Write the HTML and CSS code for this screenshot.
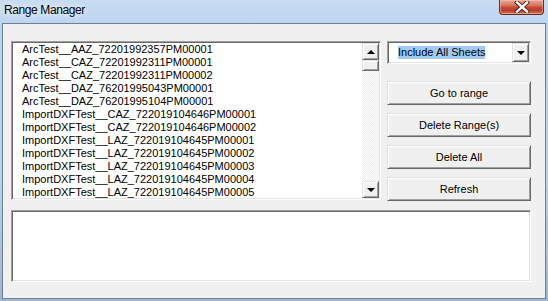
FILE: index.html
```html
<!DOCTYPE html>
<html>
<head>
<meta charset="utf-8">
<link rel="stylesheet" href="styles.css">
</head>
<body>
<div class="window">
  <div class="titlebar">
    <span class="title">Range Manager</span>
    <div class="close">
      <svg width="16" height="12" viewBox="0 0 16 12">
        <path d="M3 1.5 L13 10.5 M13 1.5 L3 10.5" stroke="#4a1a14" stroke-width="4.2" stroke-linecap="square" fill="none"/>
        <path d="M3 1.5 L13 10.5 M13 1.5 L3 10.5" stroke="#ffffff" stroke-width="2.4" stroke-linecap="square" fill="none"/>
      </svg>
    </div>
  </div>
  <div class="client">
    <div class="top">
      <div class="listbox">
        <ul class="items">
          <li>ArcTest__AAZ_72201992357PM00001</li>
          <li>ArcTest__CAZ_72201992311PM00001</li>
          <li>ArcTest__CAZ_72201992311PM00002</li>
          <li>ArcTest__DAZ_76201995043PM00001</li>
          <li>ArcTest__DAZ_76201995104PM00001</li>
          <li>ImportDXFTest__CAZ_722019104646PM00001</li>
          <li>ImportDXFTest__CAZ_722019104646PM00002</li>
          <li>ImportDXFTest__LAZ_722019104645PM00001</li>
          <li>ImportDXFTest__LAZ_722019104645PM00002</li>
          <li>ImportDXFTest__LAZ_722019104645PM00003</li>
          <li>ImportDXFTest__LAZ_722019104645PM00004</li>
          <li>ImportDXFTest__LAZ_722019104645PM00005</li>
        </ul>
        <div class="scrollbar">
          <div class="sbtn"><span class="tri up"></span></div>
          <div class="thumb"></div>
          <div class="track"></div>
          <div class="sbtn"><span class="tri down"></span></div>
        </div>
      </div>
      <div class="side">
        <div class="combo">
          <span class="value"><span class="sel">Include All Sheets</span></span>
          <div class="sbtn dd"><span class="tri down"></span></div>
        </div>
        <button class="btn first">Go to range</button>
        <button class="btn">Delete Range(s)</button>
        <button class="btn">Delete All</button>
        <button class="btn">Refresh</button>
      </div>
    </div>
    <div class="memo"></div>
  </div>
</div>
</body>
</html>
```
FILE: styles.css
```css
* { box-sizing: border-box; }
html, body { margin: 0; padding: 0; }
body {
  width: 548px;
  height: 301px;
  overflow: hidden;
  font-family: "Liberation Sans", Arial, sans-serif;
  font-size: 11px;
  color: #000;
}
.window {
  width: 548px;
  height: 301px;
  display: flex;
  flex-direction: column;
  background: linear-gradient(180deg, #c7dcf3 0%, #bcd5ef 8%, #b7d2ee 60%, #9fb6cc 100%);
}
.titlebar {
  height: 23px;
  display: flex;
  justify-content: space-between;
  align-items: flex-start;
  flex: none;
}
.title {
  padding: 3px 0 0 4px;
  font-size: 12px;
  line-height: 14px;
  letter-spacing: -0.4px;
  color: #000;
  text-shadow: 0 0 6px rgba(255,255,255,0.9), 0 0 10px rgba(255,255,255,0.7);
}
.close {
  width: 45px;
  height: 15px;
  margin-right: 4px;
  border: 1px solid #6d2a22;
  border-top: none;
  border-radius: 0 0 4px 4px;
  background: linear-gradient(180deg, #e8a492 0%, #d97c68 35%, #c4452f 55%, #b9402c 75%, #d47a60 100%);
  box-shadow: inset 0 0 0 1px rgba(255,210,200,0.45);
  display: flex;
  align-items: center;
  justify-content: center;
}
.client {
  flex: 1;
  margin: 0 2px 2px 2px;
  border: 1px solid #6e8194;
  background: #f0f0f0;
  padding: 17px 14px 0 8px;
  display: flex;
  flex-direction: column;
}
.top {
  display: flex;
  gap: 6px;
  height: 160px;
  flex: none;
}
.listbox {
  width: 370px;
  height: 159px;
  border: 1px solid;
  border-color: #a0a0a0 #ffffff #ffffff #a0a0a0;
  box-shadow: inset 1px 1px 0 #696969, inset -1px -1px 0 #e3e3e3;
  background: #fff;
  display: flex;
  padding: 1px;
}
.items {
  list-style: none;
  margin: 0;
  padding: 0 0 0 9px;
  flex: 1;
  overflow: hidden;
}
.items li {
  height: 13px;
  line-height: 13px;
  white-space: nowrap;
}
.scrollbar {
  width: 17px;
  display: flex;
  flex-direction: column;
  flex: none;
}
.sbtn {
  width: 17px;
  height: 17px;
  flex: none;
  background: #f0f0f0;
  border: 1px solid;
  border-color: #e3e3e3 #696969 #696969 #e3e3e3;
  box-shadow: inset 1px 1px 0 #ffffff, inset -1px -1px 0 #a0a0a0;
  display: flex;
  align-items: center;
  justify-content: center;
}
.thumb {
  height: 11px;
  flex: none;
  background: #f0f0f0;
  border: 1px solid;
  border-color: #e3e3e3 #696969 #696969 #e3e3e3;
  box-shadow: inset 1px 1px 0 #ffffff, inset -1px -1px 0 #a0a0a0;
}
.track {
  flex: 1;
  background: repeating-conic-gradient(#ffffff 0 25%, #ececec 0 50%) 0 0 / 2px 2px;
}
.tri {
  width: 0;
  height: 0;
  border-left: 4px solid transparent;
  border-right: 4px solid transparent;
}
.tri.up { border-bottom: 4px solid #000; }
.tri.down { border-top: 4px solid #000; }
.side {
  width: 144px;
  display: flex;
  flex-direction: column;
}
.combo {
  height: 23px;
  border: 1px solid;
  border-color: #a0a0a0 #ffffff #ffffff #a0a0a0;
  box-shadow: inset 1px 1px 0 #696969, inset -1px -1px 0 #e3e3e3;
  background: #fff;
  display: flex;
  align-items: center;
  padding: 1px 1px 1px 1px;
  margin-bottom: 17px;
}
.combo .value {
  flex: 1;
  padding-left: 9px;
  line-height: 13px;
}
.combo .sel {
  background: #9ecaf3;
  display: inline-block;
  height: 13px;
  line-height: 13px;
}
.combo .dd {
  height: 19px;
}
.btn {
  height: 24px;
  margin: 8px 0 0 0;
  padding: 0;
  font-family: "Liberation Sans", Arial, sans-serif;
  font-size: 11px;
  color: #000;
  background: #f0f0f0;
  border: 1px solid;
  border-color: #e3e3e3 #696969 #696969 #e3e3e3;
  box-shadow: inset 1px 1px 0 #ffffff, inset -1px -1px 0 #a0a0a0;
  text-align: center;
}
.btn.first { margin-top: 0; }
.memo {
  margin-top: 9px;
  width: 520px;
  height: 72px;
  background: #fff;
  border: 1px solid;
  border-color: #a0a0a0 #ffffff #ffffff #a0a0a0;
  box-shadow: inset 1px 1px 0 #696969, inset -1px -1px 0 #e3e3e3;
}
```
